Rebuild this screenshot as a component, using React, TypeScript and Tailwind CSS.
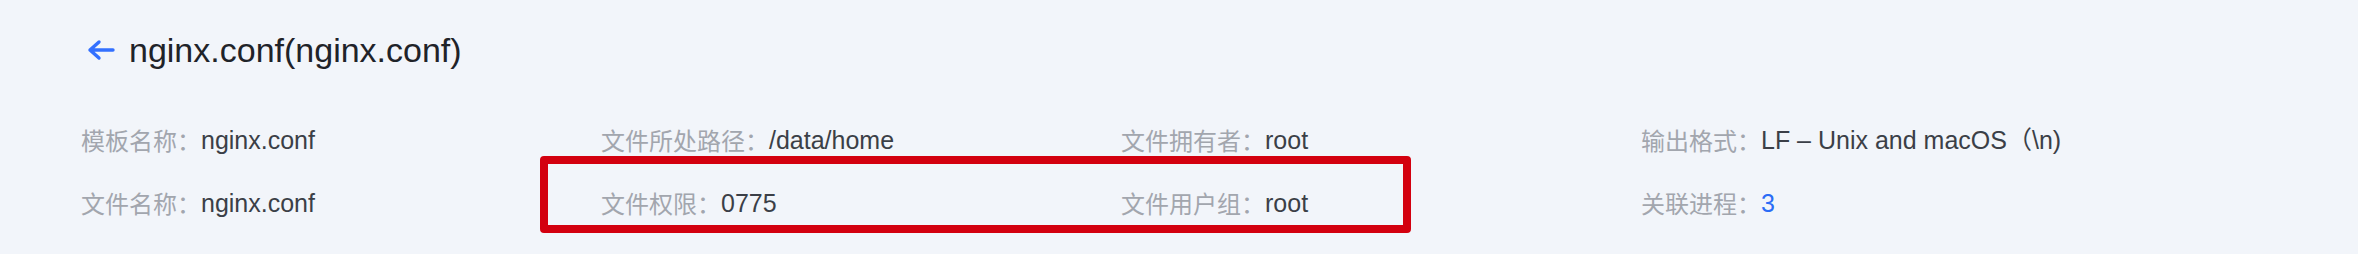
const rows = [
  [
    { label: "模板名称：", value: "nginx.conf" },
    { label: "文件所处路径：", value: "/data/home" },
    { label: "文件拥有者：", value: "root" },
    { label: "输出格式：", value: "LF – Unix and macOS（\\n)" },
  ],
  [
    { label: "文件名称：", value: "nginx.conf" },
    { label: "文件权限：", value: "0775" },
    { label: "文件用户组：", value: "root" },
    { label: "关联进程：", value: "3", link: true },
  ],
];

function BackArrow() {
  return (
    <svg width="28" height="22" viewBox="0 0 28 22" fill="none" className="shrink-0">
      <path
        d="M12 3 L3 11 L12 19 M3 11 H26"
        stroke="#3370ff"
        strokeWidth="3.4"
        strokeLinecap="round"
        strokeLinejoin="round"
      />
    </svg>
  );
}

export default function App() {
  return (
    <div className="relative w-[2358px] h-[262px] bg-white font-['Liberation_Sans','Noto_Sans_CJK_SC',sans-serif]">
      <div className="h-[254px] bg-[#f2f5fa] pl-[81px] pt-[28px]">
        {/* header */}
        <div className="flex items-center h-[44px] pl-[6px] gap-[14px]">
          <BackArrow />
          <span className="text-[34px] leading-[44px] text-[#1f2329]">nginx.conf(nginx.conf)</span>
        </div>

        {/* details */}
        <div className="mt-[50px] grid grid-cols-[repeat(4,520px)] gap-y-[27px]">
          {rows.flat().map((item) => (
            <div key={item.label} className="flex items-center h-[36px] whitespace-nowrap">
              <span className="text-[24px] leading-[36px] text-[#a2a6ae] font-['Noto_Sans_CJK_SC',sans-serif]">
                {item.label}
              </span>
              <span
                className={`text-[25px] leading-[36px] ${item.link ? "text-[#2b6cf6]" : "text-[#3b3f47]"}`}
              >
                {item.value}
              </span>
            </div>
          ))}
        </div>
      </div>

      {/* annotation box */}
      <div className="absolute left-[540px] top-[156px] w-[871px] h-[77px] border-[8px] border-[#d3000f] rounded-[4px]" />
    </div>
  );
}
